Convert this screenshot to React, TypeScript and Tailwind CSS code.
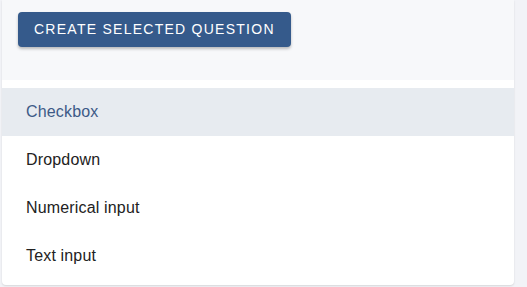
import React from "react";

export default function App() {
  const items = ["Checkbox", "Dropdown", "Numerical input", "Text input"];
  return (
    <div className="w-[527px] h-[287px] bg-[#f2f3f7] overflow-hidden" style={{ fontFamily: '"Liberation Sans", Arial, sans-serif' }}>
      <div className="ml-[2px] w-[512px] h-[285px] bg-white rounded-b-[4px] shadow-[0_1px_2px_rgba(0,0,0,0.12)] overflow-hidden">
        <div className="h-[80px] bg-[#f7f8fa] pt-[12px] pl-[16px]">
          <button className="h-[35px] px-[16px] rounded-[4px] bg-[#355a8b] text-white text-[14px] font-medium uppercase tracking-[0.09em] shadow-[0_2px_3px_rgba(0,0,0,0.25)]">
            Create selected question
          </button>
        </div>
        <div className="pt-[8px]">
          {items.map((t, i) => (
            <div
              key={t}
              className={
                i === 0
                  ? "h-[48px] flex items-center pl-[24px] bg-[#e7ebf0] text-[#3d5a87] text-[16px] tracking-[0.01em]"
                  : "h-[48px] flex items-center pl-[24px] text-[#222222] text-[16px] tracking-[0.01em]"
              }
            >
              {t}
            </div>
          ))}
        </div>
      </div>
    </div>
  );
}
